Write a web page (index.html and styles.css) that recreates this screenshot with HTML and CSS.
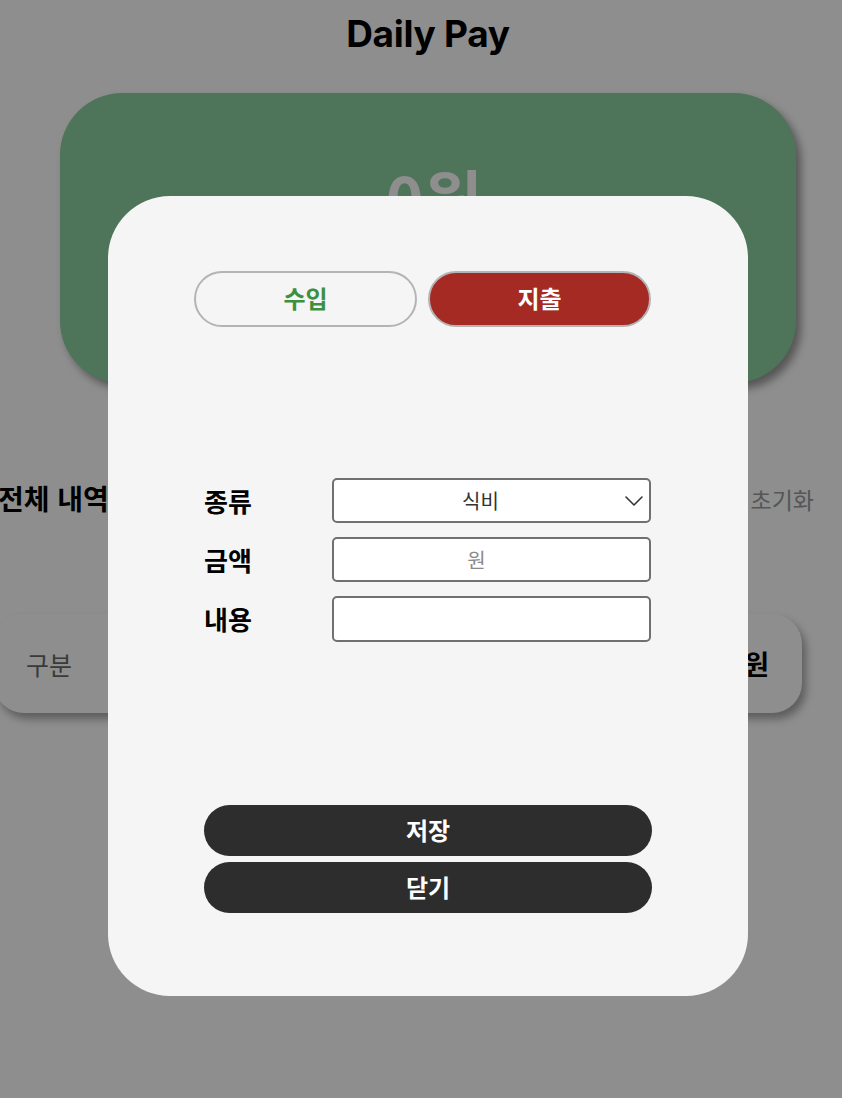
FILE: index.html
```html
<!DOCTYPE html>
<html lang="ko">
<head>
<meta charset="utf-8">
<title>Daily Pay</title>
<link rel="stylesheet" href="styles.css">
</head>
<body>
<div class="page">
  <h1 class="title">Daily Pay</h1>
  <section class="summary">
    <div class="total">0원</div>
  </section>
  <div class="history-head">
    <h2 class="history-title">전체 내역</h2>
    <button class="reset">초기화</button>
  </div>
  <div class="item">
    <span class="item-label">구분</span>
    <span class="item-amount">원</span>
  </div>
</div>

<div class="overlay">
  <div class="modal">
    <div class="toggle">
      <button class="tg tg-income">수입</button>
      <button class="tg tg-expense">지출</button>
    </div>
    <form class="form">
      <label class="lbl">종류</label>
      <div class="select-wrap">
        <select class="field select">
          <option>식비</option>
        </select>
        <svg class="chev" width="18" height="10" viewBox="0 0 18 10"><polyline points="1,1 9,9 17,1" fill="none" stroke="#333" stroke-width="1.6" stroke-linecap="round" stroke-linejoin="round"/></svg>
      </div>
      <label class="lbl">금액</label>
      <input class="field field-amount" type="text" placeholder="원">
      <label class="lbl">내용</label>
      <input class="field field-last" type="text">
    </form>
    <div class="actions">
      <button class="act">저장</button>
      <button class="act">닫기</button>
    </div>
  </div>
</div>
</body>
</html>
```
FILE: styles.css
```css
* { box-sizing: border-box; }
html, body {
  margin: 0;
  padding: 0;
  background: #ffffff;
  width: 842px;
  height: 1098px;
  overflow: hidden;
}
body {
  font-family: "Noto Sans CJK KR", "Noto Sans", sans-serif;
  color: #000;
}
.page {
  width: 842px;
}
.title {
  margin: 12px 0 0;
  padding-left: 14px;
  text-align: center;
  font-family: Inter, "Noto Sans CJK KR", sans-serif;
  font-weight: 700;
  font-size: 37px;
  line-height: 44px;
  letter-spacing: -0.3px;
}
.summary {
  margin: 37px 46px 0 60px;
  height: 290px;
  border-radius: 62px;
  background: #8dd0a1;
  box-shadow: 5px 6px 8px rgba(0, 0, 0, 0.4);
  padding-top: 71px;
}
.total {
  text-align: center;
  padding-left: 12px;
  color: #ffffff;
  font-weight: 700;
  font-size: 64px;
  line-height: 64px;
}
.history-head {
  margin-top: 95px;
  height: 40px;
  display: flex;
  align-items: center;
  justify-content: space-between;
  padding-right: 28px;
}
.history-title {
  margin: 0 0 0 -2px;
  font-size: 28px;
  font-weight: 700;
  line-height: 40px;
}
.reset {
  border: none;
  background: none;
  padding: 0;
  margin-top: 2px;
  font-family: inherit;
  font-size: 23px;
  color: #9a9a9a;
}
.item {
  margin: 96px 0 0 -6px;
  width: 808px;
  height: 99px;
  border-radius: 30px;
  background: #ffffff;
  box-shadow: 4px 6px 8px rgba(0, 0, 0, 0.35);
  display: flex;
  align-items: center;
  justify-content: space-between;
  padding: 0 33px 0 32px;
}
.item-label {
  font-size: 25px;
  color: #686868;
}
.item-amount {
  font-size: 27px;
  font-weight: 700;
}

.overlay {
  position: fixed;
  inset: 0;
  background: rgba(0, 0, 0, 0.445);
  padding: 196px 0 0 108px;
}
.modal {
  width: 640px;
  height: 800px;
  border-radius: 62px;
  background: #f5f5f5;
  padding-top: 75px;
  display: flex;
  flex-direction: column;
}
.toggle {
  display: flex;
  gap: 11px;
  margin-left: 86px;
}
.tg {
  width: 223px;
  height: 56px;
  border: 2px solid #b4b4b4;
  border-radius: 28px;
  font-family: inherit;
  font-size: 24px;
  font-weight: 700;
  padding: 0 0 3px;
}
.tg-income {
  background: #f5f5f5;
  color: #3c9040;
}
.tg-expense {
  background: #a52a24;
  color: #ffffff;
}
.form {
  margin: 151px 0 0 96px;
  display: grid;
  grid-template-columns: 128px 319px;
  grid-auto-rows: 45px;
  row-gap: 14px;
  align-items: center;
}
.lbl {
  font-size: 26px;
  font-weight: 700;
  padding-left: 0;
}
.select-wrap {
  position: relative;
  height: 45px;
}
.field {
  width: 100%;
  height: 45px;
  border: 2px solid #707070;
  border-radius: 5px;
  background: #ffffff;
  font-family: inherit;
  font-size: 20px;
  color: #333;
  text-align: center;
  outline: none;
  padding: 0 8px;
}
.select {
  padding: 0 30px 0 8px;
}
.field-amount {
  padding: 0 38px 0 8px;
}
.field-last {
  height: 46px;
}
.field::placeholder {
  color: #8a8a8a;
}
.select {
  appearance: none;
  -webkit-appearance: none;
  text-align-last: center;
}
.chev {
  position: absolute;
  right: 8px;
  top: 18px;
  pointer-events: none;
}
.actions {
  margin: 164px 0 0 96px;
  width: 448px;
  display: flex;
  flex-direction: column;
  gap: 6px;
}
.act {
  height: 51px;
  border: none;
  border-radius: 26px;
  background: #2d2d2d;
  color: #ffffff;
  font-family: inherit;
  font-size: 24px;
  font-weight: 700;
  padding: 0 0 3px;
}
```
